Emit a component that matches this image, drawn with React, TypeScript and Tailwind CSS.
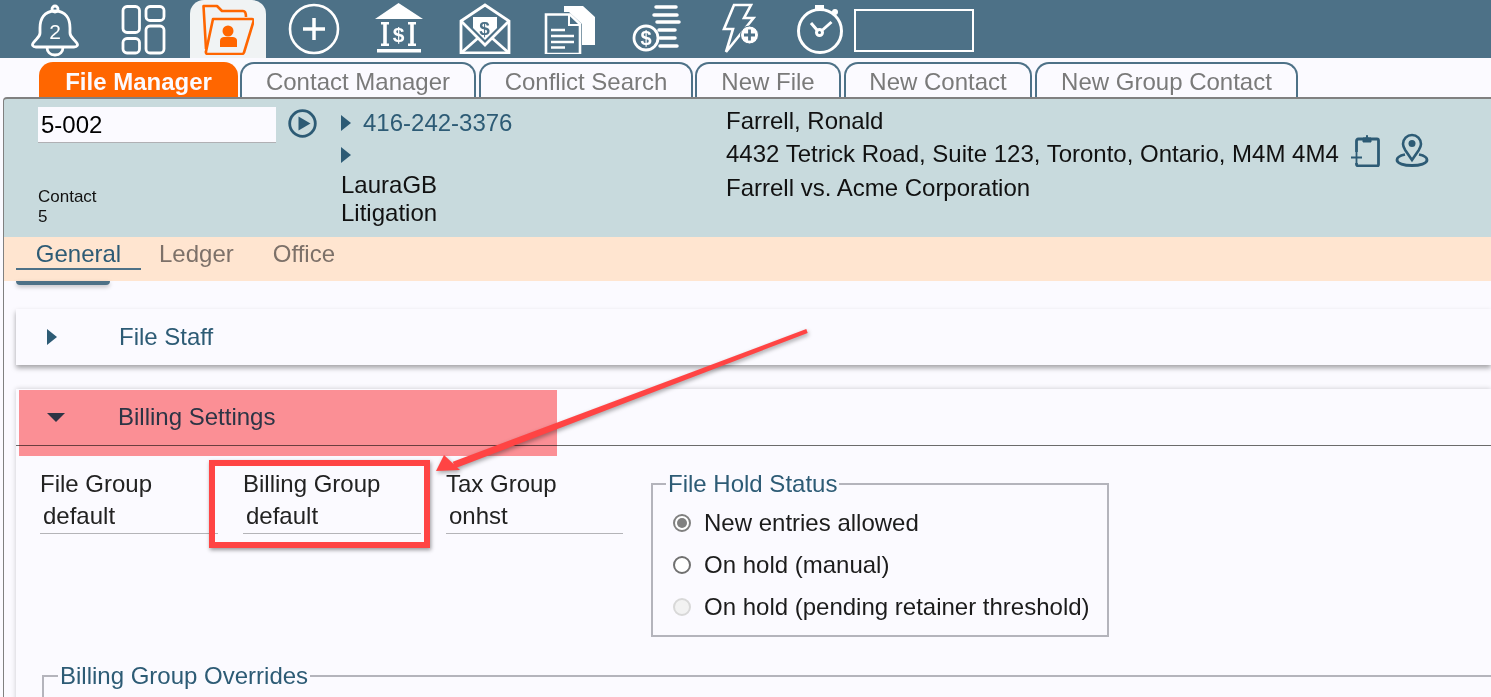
import React from 'react';

const sans = "font-['Liberation_Sans',Arial,sans-serif]";

const BellIcon = () => (
  <svg width="48" height="56" viewBox="0 0 48 56" fill="none" stroke="white" strokeWidth="2.8">
    <path d="M16 46c0 5 3 8 8 8s8-3 8-8" />
    <circle cx="24" cy="8" r="3" />
    <path d="M24 10C13 10 9 18 9 27v5c0 4-4 6-6 9-3 3-1 5 2 5h38c3 0 5-2 2-5-2-3-6-5-6-9v-5c0-9-4-17-15-17z" />
    <text x="24" y="38" textAnchor="middle" fill="white" stroke="none" fontSize="21" fontFamily="Liberation Sans">2</text>
  </svg>
);

const TilesIcon = () => (
  <svg width="46" height="54" viewBox="0 0 46 54" fill="none" stroke="white" strokeWidth="2.8">
    <rect x="3" y="5.500" width="16.500" height="26" rx="4" />
    <rect x="26" y="5.500" width="18" height="14" rx="4" />
    <rect x="3" y="37.500" width="16.500" height="14.500" rx="4" />
    <rect x="26" y="25" width="18" height="27" rx="4" />
  </svg>
);

const FolderIcon = () => (
  <svg width="52" height="52" viewBox="0 0 52 52" fill="none" stroke="#ff6600" strokeWidth="2.6" strokeLinejoin="round">
    <path d="M4 46L1.500 3H15l5 5h21c2 0 3 2 3 6" />
    <path d="M11 16h39c1 0 2 1 1.500 2.500L42 49.500c-.5 1-1 1.500-2 1.500H6c-1.500 0-2.500-1-2-2.500z" />
    <circle cx="26" cy="28" r="5.500" fill="#ff6600" stroke="none" />
    <path d="M18 44v-6c0-3 2-4 4-4h8c3 0 5 1 5 4v6z" fill="#ff6600" stroke="none" />
  </svg>
);

const PlusCircleIcon = () => (
  <svg width="52" height="52" viewBox="0 0 52 52" fill="none" stroke="white">
    <circle cx="26" cy="26" r="24" strokeWidth="2.6" />
    <path d="M26 15v22M15 26h22" strokeWidth="3.500" />
  </svg>
);

const BankIcon = () => (
  <svg width="48" height="52" viewBox="0 0 48 52" fill="white">
    <path d="M23.500 2L0 18h48z" />
    <rect x="2" y="48" width="44" height="3.500" />
    <path d="M6 21h8v2.500h-2.200v19H14V45H6v-2.500h2.200v-19H6zM33 21h8v2.500h-2.200v19H41V45h-8v-2.500h2.200v-19H33z" />
    <text x="23.500" y="41" textAnchor="middle" fontSize="21" fontWeight="700" fontFamily="Liberation Sans">$</text>
  </svg>
);

const MailIcon = () => (
  <svg width="52" height="52" viewBox="0 0 52 52" fill="none" stroke="white" strokeWidth="2.800">
    <path d="M2 19L26 3l24 16v32H2z" />
    <path d="M2 19l24 24 24-24M2 51l17-15M50 51L33 36" />
    <path d="M14 26V15h24v11L26 38z" fill="white" stroke="none" />
    <text x="25.500" y="33" textAnchor="middle" fill="#4d7187" stroke="none" fontSize="19" fontWeight="700" fontFamily="Liberation Sans">$</text>
  </svg>
);

const DocsIcon = () => (
  <svg width="52" height="52" viewBox="0 0 52 52">
    <path d="M20 4h19l12 11v28H38V22L25 10h-5z" fill="white" />
    <path d="M2 12.500h24l10 9.500v30H2z" fill="none" stroke="white" strokeWidth="2.600" />
    <path d="M25 13v10h11" fill="none" stroke="white" strokeWidth="2" />
    <path d="M7 28h14M7 34h23M7 40h23M7 45.500h14" stroke="white" strokeWidth="2.600" fill="none" />
  </svg>
);

const CoinsIcon = () => (
  <svg width="50" height="52" viewBox="0 0 50 52" fill="none" stroke="white">
    <path d="M24 6h20M22 14h23M25 21h22M27 29h16M28 37h15M28 45h17" strokeWidth="3.500" strokeLinecap="round" />
    <circle cx="14" cy="37" r="12" strokeWidth="2.800" fill="#4d7187" />
    <text x="14" y="44" textAnchor="middle" fill="white" stroke="none" fontSize="20" fontWeight="700" fontFamily="Liberation Sans">$</text>
  </svg>
);

const BoltPlusIcon = () => (
  <svg width="40" height="52" viewBox="0 0 40 52" fill="none" stroke="white" strokeWidth="2.600" strokeLinejoin="miter">
    <path d="M12 3h17l-7 13h9.500L4 50l7-23H2z" />
    <circle cx="27.500" cy="33" r="9" fill="white" stroke="#4d7187" strokeWidth="1" />
    <path d="M27.500 27.500v11M22 33h11" stroke="#4d7187" strokeWidth="2.800" />
  </svg>
);

const StopwatchIcon = () => (
  <svg width="48" height="52" viewBox="0 0 48 52" fill="none" stroke="white">
    <rect x="19" y="2" width="9" height="5" fill="white" stroke="none" />
    <circle cx="39" cy="9" r="3" fill="white" stroke="none" />
    <circle cx="24" cy="28" r="21.500" strokeWidth="3" />
    <circle cx="23.500" cy="29.500" r="3" strokeWidth="3" />
    <path d="M21 27l-6-7M26.500 27l9-8" strokeWidth="3" />
  </svg>
);

const PlayCircle = () => (
  <svg width="29" height="29" viewBox="0 0 29 29" fill="none" stroke="#2d5b75">
    <circle cx="14.500" cy="14.500" r="12.800" strokeWidth="2.800" />
    <path d="M10.500 7.500l12 7-12 7z" fill="#2d5b75" stroke="none" />
  </svg>
);

const ClipboardPlus = () => (
  <svg width="29" height="34" viewBox="0 0 29 34" fill="none" stroke="#2d5b75" strokeWidth="2.800">
    <path d="M5.500 19V8c0-1 .5-2 2-2H26c1 0 1.500.5 1.500 1.500v24c0 1-.5 1.500-1.500 1.500H7.500c-1 0-2-.5-2-1.500V30" />
    <path d="M12 9V5h3l1-3 1 3h3v4z" fill="#2d5b75" strokeWidth="1" />
    <path d="M0 24.500h11M5.500 19v11" strokeWidth="1.800" />
  </svg>
);

const MapPin = () => (
  <svg width="34" height="34" viewBox="0 0 34 34" fill="none" stroke="#2d5b75" strokeWidth="2.600">
    <path d="M17 27l-6.500-9.500C9 15 8 13.500 8 11c0-5 4-9 9-9s9 4 9 9c0 2.500-1 4-2.500 6.500z" />
    <circle cx="17" cy="10.500" r="3.500" fill="#2d5b75" stroke="none" />
    <path d="M10 21.500c-5 1-8 3-8 5.500 0 3.500 7 5.500 15 5.500s15-2 15-5.500c0-2.500-3-4.500-8-5.500" strokeWidth="2.800" />
  </svg>
);

const Caret = () => (
  <span className="block h-0 w-0 border-y-[8px] border-l-[10px] border-y-transparent border-l-[#2d5b75]" />
);

const TopTab = ({ label, className }: { label: string; className: string }) => (
  <div className={`flex h-[35px] shrink-0 items-center justify-center rounded-t-[14px] border-2 border-b-0 border-[#4d7187] bg-[#fbfaff] pt-[3px] text-[24px] text-[#7a7a7a] ${className}`}>
    {label}
  </div>
);

const Field = ({ label, value, className }: { label: string; value: string; className: string }) => (
  <div className={className}>
    <div className="h-[33px] text-[24px] leading-[33px] text-[#222]">{label}</div>
    <div className="h-[34px] border-b border-[#b4b4b8] pl-[3px] text-[24px] leading-[31px] text-[#222]">{value}</div>
  </div>
);

const Radio = ({ label, state }: { label: string; state: 'on' | 'off' | 'disabled' }) => (
  <div className="flex h-[42px] items-center">
    <span
      className={`mr-[13px] ml-[16px] flex h-[18px] w-[18px] items-center justify-center rounded-full border-2 ${
        state === 'on' ? 'border-[#808080] bg-white' : state === 'off' ? 'border-[#707070] bg-white' : 'border-[#d8d8d8] bg-[#f2f2f2]'
      }`}
    >
      {state === 'on' && <span className="h-[10px] w-[10px] rounded-full bg-[#808080]" />}
    </span>
    <span className="text-[24px] text-[#1c1c1c]">{label}</span>
  </div>
);

export default function App() {
  return (
    <div className={`${sans} relative h-[697px] w-[1491px] overflow-hidden bg-[#fbfaff]`}>
      {/* top nav */}
      <div className="flex h-[58px] items-end bg-[#4d7187] pl-[31px]">
        <div className="mb-[1px] shrink-0"><BellIcon /></div>
        <div className="mb-[3px] ml-[41px] shrink-0"><TilesIcon /></div>
        <div className="ml-[24px] flex h-[58px] w-[76px] shrink-0 items-center justify-center rounded-t-[14px] bg-[#f0f3f4]"><FolderIcon /></div>
        <div className="mb-[3px] ml-[22px] shrink-0"><PlusCircleIcon /></div>
        <div className="mb-[5px] ml-[35px] shrink-0"><BankIcon /></div>
        <div className="mb-[4px] ml-[36px] shrink-0"><MailIcon /></div>
        <div className="mb-[4px] ml-[33px] shrink-0"><DocsIcon /></div>
        <div className="mb-[5px] ml-[36px] shrink-0"><CoinsIcon /></div>
        <div className="mb-[4px] ml-[40px] shrink-0"><BoltPlusIcon /></div>
        <div className="mb-[3px] ml-[34px] shrink-0"><StopwatchIcon /></div>
        <div className="mb-[6px] ml-[10px] h-[43px] w-[120px] shrink-0 border-2 border-white" />
      </div>

      {/* app tabs */}
      <div className="flex h-[39px] items-end pl-[39px]">
        <div className="flex h-[35px] w-[199px] items-center justify-center rounded-t-[14px] bg-[#ff6600] pt-[5px] text-[24px] font-bold text-[#fbfaff]">File Manager</div>
        <TopTab label="Contact Manager" className="ml-[2px] w-[236px]" />
        <TopTab label="Conflict Search" className="ml-[3px] w-[214px]" />
        <TopTab label="New File" className="ml-[2px] w-[146px]" />
        <TopTab label="New Contact" className="ml-[3px] w-[188px]" />
        <TopTab label="New Group Contact" className="ml-[3px] w-[263px]" />
      </div>

      {/* file header */}
      <div className="ml-[3px] flex h-[140px] rounded-tl-[4px] border-t-2 border-l border-[#808080] bg-[#c8dadd]">
        <div className="ml-[34px] w-[303px] shrink-0 pt-[8px]">
          <div className="flex items-start">
            <div className="h-[36px] w-[238px] shrink-0 border-b border-[#b0b0b4] bg-[#fbfaff] pl-[3px] text-[24px] leading-[36px] text-black">5-002</div>
            <div className="mt-[2px] ml-[12px]"><PlayCircle /></div>
          </div>
          <div className="mt-[44px] text-[17px] leading-[20px] text-[#111]">Contact</div>
          <div className="text-[17px] leading-[20px] text-[#111]">5</div>
        </div>
        <div className="w-[385px] shrink-0 pt-[8px]">
          <div className="flex h-[32px] items-center">
            <Caret />
            <span className="ml-[12px] text-[24px] text-[#2d5b75]">416-242-3376</span>
          </div>
          <div className="flex h-[32px] items-center"><Caret /></div>
          <div className="h-[28px] text-[24px] leading-[28px] text-[#111]">LauraGB</div>
          <div className="h-[28px] text-[24px] leading-[28px] text-[#111]">Litigation</div>
        </div>
        <div className="pt-[5px] text-[24px] text-[#111]">
          <div className="h-[33px] leading-[33px]">Farrell, Ronald</div>
          <div className="flex h-[33px] items-center leading-[33px]">
            <span className="shrink-0">4432 Tetrick Road, Suite 123, Toronto, Ontario, M4M 4M4</span>
            <span className="mb-[7px] ml-[12px] shrink-0"><ClipboardPlus /></span>
            <span className="mb-[7px] ml-[15px] shrink-0"><MapPin /></span>
          </div>
          <div className="h-[35px] leading-[35px]">Farrell vs. Acme Corporation</div>
        </div>
      </div>

      {/* section tabs */}
      <div className="ml-[3px] flex h-[44px] border-l border-[#808080] bg-[#ffe5d0]">
        <div className="ml-[12px] h-[33px] w-[125px] border-b-2 border-[#4d7187] text-center text-[24px] leading-[33px] text-[#2d5b75]">General</div>
        <div className="ml-[18px] text-[24px] leading-[33px] text-[#7d7169]">Ledger</div>
        <div className="ml-[39px] text-[24px] leading-[33px] text-[#7d7169]">Office</div>
      </div>

      {/* page body */}
      <div className="ml-[3px] h-[416px] border-l border-[#808080] pl-[12px]">
        <div className="h-[4px] w-[94px] rounded-b-[5px] bg-[#4d7187] shadow-[0_2px_4px_rgba(0,0,0,0.25)]" />
        <div className="mt-[24px] flex h-[56px] items-center bg-[#fbfaff] shadow-[0_3px_5px_rgba(0,0,0,0.35)]">
          <span className="ml-[31px]"><Caret /></span>
          <span className="ml-[62px] text-[24px] text-[#2d5b75]">File Staff</span>
        </div>
        <div className="mt-[24px] h-[330px] bg-[#fbfaff] shadow-[0_0_5px_rgba(0,0,0,0.2)]">
          <div className="flex h-[57px] items-center border-b border-[#6b6b6b]">
            <span className="ml-[31px] h-0 w-0 border-x-[9px] border-t-[9px] border-x-transparent border-t-[#2d5b75]" />
            <span className="ml-[53px] text-[24px] text-[#2d5b75]">Billing Settings</span>
          </div>
          <div className="flex pt-[21px]">
            <Field label="File Group" value="default" className="ml-[24px] w-[178px]" />
            <Field label="Billing Group" value="default" className="ml-[25px] w-[178px]" />
            <Field label="Tax Group" value="onhst" className="ml-[25px] w-[177px]" />
            <fieldset className="mt-[5px] ml-[28px] h-[165px] w-[458px] border-2 border-[#b4b4bc] pl-[4px]">
              <legend className="ml-[9px] px-[2px] text-[24px] leading-[24px] text-[#2d5b75]">File Hold Status</legend>
              <div className="mt-[6px]">
                <Radio label="New entries allowed" state="on" />
                <Radio label="On hold (manual)" state="off" />
                <Radio label="On hold (pending retainer threshold)" state="disabled" />
              </div>
            </fieldset>
          </div>
          <fieldset className="mt-[27px] ml-[26px] h-[60px] border-t-2 border-l-2 border-[#b4b4bc]">
            <legend className="ml-[14px] px-[2px] text-[24px] leading-[24px] text-[#2d5b75]">Billing Group Overrides</legend>
          </fieldset>
        </div>
      </div>

      {/* annotations from the screenshot */}
      <div className="absolute top-[390px] left-[19px] h-[66px] w-[538px] bg-[#ff9295] mix-blend-multiply" />
      <div className="absolute top-[460px] left-[209px] h-[88px] w-[221px] border-[6px] border-[#ff4444] shadow-[1px_2px_4px_rgba(0,0,0,0.4)]" />
      <svg className="absolute top-[320px] left-[430px] drop-shadow-[1px_2px_2px_rgba(0,0,0,0.35)]" width="390" height="160" viewBox="0 0 390 160" fill="none">
        <path d="M376.300 9.100L377.700 12.900L25.200 148.300L22.800 141.700z" fill="#ff4444" />
        <path d="M6 151L14 135L30 150z" fill="#ff4444" />
      </svg>
    </div>
  );
}
